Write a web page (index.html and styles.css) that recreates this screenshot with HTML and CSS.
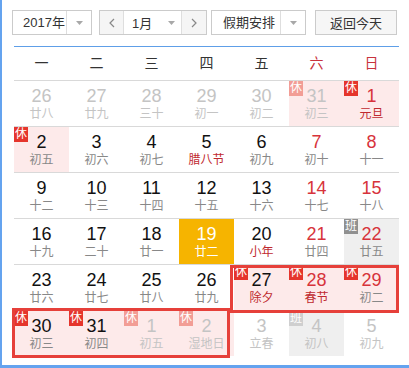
FILE: index.html
```html
<!DOCTYPE html>
<html lang="zh-CN">
<head>
    <meta charset="UTF-8">
    <title>万年历</title>
    <link rel="stylesheet" href="styles.css">
</head>
<body>
    <div class="frame">
        <div class="toolbar">
            <div class="select year">
                <span class="select-label">2017年</span>
                <span class="select-arrow"><svg width="7" height="4" viewBox="0 0 7 4"><path d="M0 0h7L3.5 4z" fill="#a8a8a8"/></svg></span>
            </div>
            <div class="month-group">
                <span class="nav prev"><svg width="6" height="10" viewBox="0 0 6 10"><path d="M5 1L1 5l4 4" fill="none" stroke="#888" stroke-width="1.2"/></svg></span>
                <span class="month">
                    <span class="month-label">1月</span>
                    <svg width="7" height="4" viewBox="0 0 7 4"><path d="M0 0h7L3.5 4z" fill="#a8a8a8"/></svg>
                </span>
                <span class="nav next"><svg width="6" height="10" viewBox="0 0 6 10"><path d="M1 1l4 4-4 4" fill="none" stroke="#888" stroke-width="1.2"/></svg></span>
            </div>
            <div class="select holiday">
                <span class="select-label">假期安排</span>
                <span class="select-arrow"><svg width="7" height="4" viewBox="0 0 7 4"><path d="M0 0h7L3.5 4z" fill="#a8a8a8"/></svg></span>
            </div>
            <button class="today-btn">返回今天</button>
        </div>

        <div class="calendar">
            <div class="weekdays">
                <span>一</span><span>二</span><span>三</span><span>四</span><span>五</span>
                <span class="weekend">六</span><span class="weekend">日</span>
            </div>

            <div class="days">
                <!-- 第1周 -->
                <div class="day other"><b>26</b><i>廿八</i></div>
                <div class="day other"><b>27</b><i>廿九</i></div>
                <div class="day other"><b>28</b><i>三十</i></div>
                <div class="day other"><b>29</b><i>初一</i></div>
                <div class="day other"><b>30</b><i>初二</i></div>
                <div class="day other rest"><em class="tag">休</em><b>31</b><i>初三</i></div>
                <div class="day weekend rest"><em class="tag">休</em><b>1</b><i class="fest">元旦</i></div>
                <!-- 第2周 -->
                <div class="day rest"><em class="tag">休</em><b>2</b><i>初五</i></div>
                <div class="day"><b>3</b><i>初六</i></div>
                <div class="day"><b>4</b><i>初七</i></div>
                <div class="day"><b>5</b><i class="fest">腊八节</i></div>
                <div class="day"><b>6</b><i>初九</i></div>
                <div class="day weekend"><b>7</b><i>初十</i></div>
                <div class="day weekend"><b>8</b><i>十一</i></div>
                <!-- 第3周 -->
                <div class="day"><b>9</b><i>十二</i></div>
                <div class="day"><b>10</b><i>十三</i></div>
                <div class="day"><b>11</b><i>十四</i></div>
                <div class="day"><b>12</b><i>十五</i></div>
                <div class="day"><b>13</b><i>十六</i></div>
                <div class="day weekend"><b>14</b><i>十七</i></div>
                <div class="day weekend"><b>15</b><i>十八</i></div>
                <!-- 第4周 -->
                <div class="day"><b>16</b><i>十九</i></div>
                <div class="day"><b>17</b><i>二十</i></div>
                <div class="day"><b>18</b><i>廿一</i></div>
                <div class="day today"><b>19</b><i>廿二</i></div>
                <div class="day"><b>20</b><i class="fest">小年</i></div>
                <div class="day weekend"><b>21</b><i>廿四</i></div>
                <div class="day weekend work"><em class="tag">班</em><b>22</b><i>廿五</i></div>
                <!-- 第5周 -->
                <div class="day"><b>23</b><i>廿六</i></div>
                <div class="day"><b>24</b><i>廿七</i></div>
                <div class="day"><b>25</b><i>廿八</i></div>
                <div class="day"><b>26</b><i>廿九</i></div>
                <div class="day rest"><em class="tag">休</em><b>27</b><i class="fest">除夕</i></div>
                <div class="day weekend rest"><em class="tag">休</em><b>28</b><i class="fest">春节</i></div>
                <div class="day weekend rest"><em class="tag">休</em><b>29</b><i>初二</i></div>
                <!-- 第6周 -->
                <div class="day rest"><em class="tag">休</em><b>30</b><i>初三</i></div>
                <div class="day rest"><em class="tag">休</em><b>31</b><i>初四</i></div>
                <div class="day other rest"><em class="tag">休</em><b>1</b><i>初五</i></div>
                <div class="day other rest"><em class="tag">休</em><b>2</b><i>湿地日</i></div>
                <div class="day other"><b>3</b><i>立春</i></div>
                <div class="day other work"><em class="tag">班</em><b>4</b><i>初八</i></div>
                <div class="day other"><b>5</b><i>初九</i></div>

                <!-- 春节假期框 -->
                <div class="range range-a"></div>
                <div class="range range-b"></div>
            </div>
        </div>
    </div>
</body>
</html>
```

FILE: styles.css
```css
body {
    margin: 0;
    font-family: "Liberation Sans", "Noto Sans CJK SC", sans-serif;
    background-color: #fff;
    color: #333;
}

.frame {
    border-left: 2px solid #64a3ef;
    border-bottom: 3px solid #64a3ef;
    padding: 10px 12px 9px 10px;
}

/* 工具栏 */
.toolbar {
    display: flex;
    height: 25px;
    margin-bottom: 11px;
    font-size: 13px;
}

.select {
    display: flex;
    box-sizing: border-box;
    height: 25px;
    border: 1px solid #cbcbcb;
    background-color: #fff;
}

.select-label {
    flex: 1;
    line-height: 23px;
    padding-left: 10px;
    white-space: nowrap;
}

.select-arrow {
    display: flex;
    align-items: center;
    justify-content: center;
    width: 24px;
    border-left: 1px solid #dedede;
}

.year {
    width: 80px;
}

.holiday {
    width: 95px;
    margin-left: 4px;
}

.holiday .select-label {
    padding-left: 11px;
}

.month-group {
    display: flex;
    box-sizing: border-box;
    width: 108px;
    height: 25px;
    margin-left: 7px;
    border: 1px solid #cbcbcb;
}

.nav {
    display: flex;
    align-items: center;
    justify-content: center;
    width: 23px;
    background-color: #f5f5f5;
}

.prev {
    border-right: 1px solid #dedede;
}

.next {
    width: 24px;
    border-left: 1px solid #dedede;
}

.month {
    flex: 1;
    display: flex;
    align-items: center;
    padding-left: 8px;
}

.month-label {
    width: 36px;
}

.today-btn {
    box-sizing: border-box;
    width: 82px;
    height: 25px;
    margin-left: 9px;
    padding: 0;
    border: 1px solid #cbcbcb;
    background-color: #f6f6f6;
    font-family: inherit;
    font-size: 13px;
    color: #333;
}

/* 日历 */
.calendar {
    width: 385px;
    margin-left: 2px;
    border-top: 1px solid #5e9fe8;
}

.weekdays {
    display: grid;
    grid-template-columns: repeat(7, 55px);
    height: 33px;
    line-height: 33px;
    text-align: center;
    font-size: 14px;
    color: #333;
}

.weekdays .weekend {
    color: #c8323c;
}

.days {
    position: relative;
    display: grid;
    grid-template-columns: repeat(7, 55px);
    grid-auto-rows: 46px;
}

.day {
    position: relative;
    box-sizing: border-box;
    border-top: 1px solid #d9d9d9;
    text-align: center;
    padding-top: 5px;
}

.day b {
    display: block;
    font-weight: normal;
    font-size: 18px;
    line-height: 20px;
    color: #111;
}

.day i {
    display: block;
    font-style: normal;
    font-size: 12px;
    line-height: 16px;
    color: #888;
    white-space: nowrap;
}

.day.weekend b {
    color: #d7333b;
}

.day i.fest {
    color: #bf2a2f;
}

.day.rest {
    background-color: #fdeaea;
}

.day.work {
    background-color: #efefef;
}

.day.other b,
.day.other i {
    color: #c4c4c4;
}

.day.today {
    background-color: #f6b400;
}

.day.today b,
.day.today i {
    color: #fff;
}

.tag {
    position: absolute;
    top: 0;
    left: 0;
    width: 14px;
    height: 15px;
    font-style: normal;
    font-size: 12px;
    line-height: 15px;
    text-align: center;
    color: #fff;
    background-color: #e5352c;
}

.work .tag {
    background-color: #909090;
}

.other .tag {
    background-color: #f29d95;
}

.other.work .tag {
    background-color: #cfcfcf;
}

/* 假期框浮在日期格之上 */
.range {
    position: absolute;
    box-sizing: border-box;
    border: 3px solid #e6403a;
    pointer-events: none;
}

.range-a {
    top: 185px;
    left: 216px;
    width: 169px;
    height: 48px;
}

.range-b {
    top: 228px;
    left: -2px;
    width: 218px;
    height: 50px;
}
```
